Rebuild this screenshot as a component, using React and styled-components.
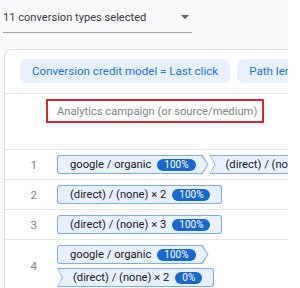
import React from 'react';
import styled, { createGlobalStyle } from 'styled-components';

const GlobalStyle = createGlobalStyle`
  html, body {
    margin: 0;
    padding: 0;
    background: #ffffff;
    font-family: Roboto, "Liberation Sans", Arial, sans-serif;
  }
`;

const Page = styled.div`
  width: 288px;
  height: 288px;
  overflow: hidden;
  background: #f8f9fa;
  padding: 0 0 0 3px;
  box-sizing: border-box;
`;

const Select = styled.div`
  width: 189px;
  height: 33px;
  box-sizing: border-box;
  padding-top: 2px;
  border-bottom: 1px solid #9aa0a6;
  display: flex;
  align-items: center;
  justify-content: space-between;
  font-size: 11.1px;
  color: #3c4043;
`;

const Caret = styled.span`
  width: 0;
  height: 0;
  margin-right: 3px;
  border-left: 4px solid transparent;
  border-right: 4px solid transparent;
  border-top: 4px solid #5f6368;
`;

const Card = styled.div`
  margin: 16px 0 0 1px;
  width: 520px;
  background: #ffffff;
  border: 1px solid #dadce0;
  border-radius: 8px;
`;

const FilterBar = styled.div`
  display: flex;
  gap: 7px;
  padding: 9px 15px 10px;
  border-bottom: 1px solid #e3e5e8;
`;

const FilterChip = styled.div`
  height: 24px;
  padding: 0 12px;
  display: flex;
  align-items: center;
  background: #e8f0fe;
  border-radius: 7px;
  color: #1a73e8;
  font-size: 11.6px;
  white-space: nowrap;
`;

const HeaderRow = styled.div`
  height: 56px;
  box-sizing: border-box;
  padding: 5px 0 0 41px;
  border-bottom: 1px solid #e3e5e8;
`;

const HeaderLabel = styled.div`
  display: inline-flex;
  align-items: center;
  width: 218px;
  height: 24px;
  box-sizing: border-box;
  padding: 0 9px;
  border: 2px solid #e5202e;
  color: #80868b;
  font-size: 11.2px;
  white-space: nowrap;
`;

const Row = styled.div`
  display: grid;
  grid-template-columns: 52px 1fr;
  align-items: center;
  padding: 5px 0;
  border-bottom: 1px solid #e3e5e8;
`;

const RowNumber = styled.div`
  text-align: right;
  padding-right: 20px;
  color: #80868b;
  font-size: 11.6px;
`;

const Paths = styled.div`
  display: flex;
  flex-direction: column;
  gap: 4px;
`;

const Path = styled.div`
  display: flex;
  gap: 1px;
`;

const shapes = {
  plain: 'none',
  arrow: 'polygon(0 0, calc(100% - 6px) 0, 100% 50%, calc(100% - 6px) 100%, 0 100%)',
  notch: 'polygon(0 0, 100% 0, 100% 100%, 0 100%, 5px 50%)',
};

const Chip = styled.div`
  padding: 1px;
  background: #7baaf7;
  border-radius: ${p => (p.$shape === 'notch' ? '0 3px 3px 0' : '3px')};
  clip-path: ${p => shapes[p.$shape]};
  flex-shrink: 0;
`;

const ChipBody = styled.div`
  height: 17px;
  display: flex;
  align-items: center;
  gap: 6px;
  background: #e8f0fe;
  border-radius: ${p => (p.$shape === 'notch' ? '0 2px 2px 0' : '2px')};
  clip-path: ${p => shapes[p.$shape]};
  padding: ${p => (p.$shape === 'arrow' ? '0 12px 0 12px' : p.$shape === 'notch' ? '0 11px 0 15px' : '0 11px 0 12px')};
  color: #202124;
  font-size: 11.2px;
  white-space: nowrap;
`;

const Badge = styled.span`
  height: 12px;
  padding: 0 7px;
  display: inline-flex;
  align-items: center;
  background: #1967d2;
  color: #ffffff;
  border-radius: 6px;
  font-size: 10px;
`;

const rows = [
  [[
    { label: 'google / organic', pct: '100%', shape: 'arrow' },
    { label: '(direct) / (none) × 2', pct: '100%', shape: 'notch' },
  ]],
  [[{ label: '(direct) / (none) × 2', pct: '100%', shape: 'plain' }]],
  [[{ label: '(direct) / (none) × 3', pct: '100%', shape: 'plain' }]],
  [
    [{ label: 'google / organic', pct: '100%', shape: 'arrow' }],
    [{ label: '(direct) / (none) × 2', pct: '0%', shape: 'notch' }],
  ],
];

export default function App() {
  return (
    <>
      <GlobalStyle />
      <Page>
        <Select>
          11 conversion types selected
          <Caret />
        </Select>
        <Card>
          <FilterBar>
            <FilterChip>Conversion credit model = Last click</FilterChip>
            <FilterChip>Path length</FilterChip>
          </FilterBar>
          <HeaderRow>
            <HeaderLabel>Analytics campaign (or source/medium)</HeaderLabel>
          </HeaderRow>
          {rows.map((paths, i) => (
            <Row key={i}>
              <RowNumber>{i + 1}</RowNumber>
              <Paths>
                {paths.map((steps, j) => (
                  <Path key={j}>
                    {steps.map((s, k) => (
                      <Chip key={k} $shape={s.shape}>
                        <ChipBody $shape={s.shape}>
                          {s.label}
                          <Badge>{s.pct}</Badge>
                        </ChipBody>
                      </Chip>
                    ))}
                  </Path>
                ))}
              </Paths>
            </Row>
          ))}
        </Card>
      </Page>
    </>
  );
}
